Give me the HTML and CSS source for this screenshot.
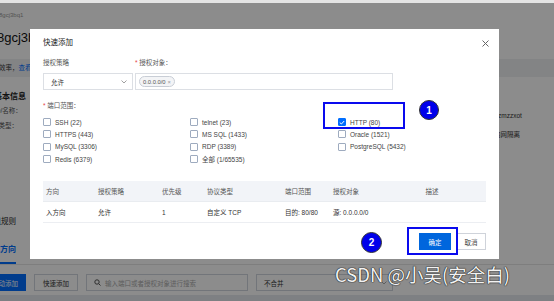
FILE: index.html
```html
<!DOCTYPE html>
<html lang="zh">
<head>
<meta charset="utf-8">
<title>快速添加</title>
<link rel="stylesheet" href="styles.css">
</head>
<body>
<div class="page">
  <div class="head">
    <div class="crumb">8gcj3bq1</div>
    <div class="big">8gcj3b</div>
  </div>
  <div class="band"><span>审核效率，<a class="lnk">查看</a></span></div>
  <div class="info">
    <div class="info-left">
      <div class="sec">基本信息</div>
      <div class="kv">ID/名称：</div>
      <div class="kv kv2">例类型：</div>
      <div class="kv kv3">时间：</div>
    </div>
    <div class="info-right">
      <div class="rv">zmzzxot</div>
      <div class="rv rv2 lnk">内网隔离</div>
    </div>
  </div>
  <div class="rules">全组规则</div>
  <div class="tabs"><span class="tab">入方向</span></div>
  <div class="toolbar">
    <span class="btn-primary">手动添加</span>
    <span class="btn">快速添加</span>
    <span class="search">
      <svg width="7" height="7" viewBox="0 0 7 7"><circle cx="3" cy="3" r="2.2" fill="none" stroke="#555" stroke-width="1"/><line x1="4.6" y1="4.6" x2="6.5" y2="6.5" stroke="#555" stroke-width="1"/></svg>
      <span class="ph">输入端口或者授权对象进行搜索</span>
    </span>
    <span class="merge">不合并
      <svg width="6" height="4" viewBox="0 0 6 4"><polyline points="0.5,0.5 3,3 5.5,0.5" fill="none" stroke="#999" stroke-width="0.8"/></svg>
    </span>
  </div>
  <div class="bthead">
    <span class="c1">授权策略</span>
    <span class="c2">优先级 ⓘ</span>
    <span class="c3">协议类型</span>
    <span class="c4">端口范围 ⓘ</span>
    <span class="c5">授权对象 ⓘ</span>
    <span class="c6">描述</span>
  </div>

  <div class="mask"></div>

  <div class="dialog">
    <div class="dlg-head">
      <span class="dlg-title">快速添加</span>
      <svg class="close" width="7" height="7" viewBox="0 0 7 7"><line x1="0.5" y1="0.5" x2="6.5" y2="6.5" stroke="#666" stroke-width="1"/><line x1="6.5" y1="0.5" x2="0.5" y2="6.5" stroke="#666" stroke-width="1"/></svg>
    </div>
    <div class="form-row">
      <div class="field f1">
        <div class="lbl">授权策略</div>
        <div class="select">允许
          <svg width="6" height="4" viewBox="0 0 6 4"><polyline points="0.5,0.5 3,3 5.5,0.5" fill="none" stroke="#888" stroke-width="0.8"/></svg>
        </div>
      </div>
      <div class="field f2">
        <div class="lbl"><span class="req">*</span> 授权对象：</div>
        <div class="input"><span class="tag">0.0.0.0/0 <span class="x">×</span></span></div>
      </div>
    </div>
    <div class="lbl ports-lbl"><span class="req">*</span> 端口范围：</div>
    <div class="ports">
      <label class="cb"><span class="box"></span>SSH (22)</label>
      <label class="cb"><span class="box"></span>telnet (23)</label>
      <label class="cb"><span class="box on"><svg width="6" height="5" viewBox="0 0 6 5"><polyline points="0.8,2.6 2.4,4 5.2,1" fill="none" stroke="#fff" stroke-width="1"/></svg></span>HTTP (80)</label>
      <label class="cb"><span class="box"></span>HTTPS (443)</label>
      <label class="cb"><span class="box"></span>MS SQL (1433)</label>
      <label class="cb"><span class="box"></span>Oracle (1521)</label>
      <label class="cb"><span class="box"></span>MySQL (3306)</label>
      <label class="cb"><span class="box"></span>RDP (3389)</label>
      <label class="cb"><span class="box"></span>PostgreSQL (5432)</label>
      <label class="cb"><span class="box"></span>Redis (6379)</label>
      <label class="cb"><span class="box"></span>全部 (1/65535)</label>
    </div>
    <div class="tbl">
      <div class="tr th">
        <span>方向</span><span>授权策略</span><span>优先级</span><span>协议类型</span><span>端口范围</span><span>授权对象</span><span class="desc">描述</span>
      </div>
      <div class="tr td">
        <span>入方向</span><span>允许</span><span>1</span><span>自定义 TCP</span><span>目的: 80/80</span><span>源: 0.0.0.0/0</span><span class="desc"></span>
      </div>
    </div>
    <div class="footer">
      <span class="ok">确定</span>
      <span class="cancel">取消</span>
    </div>
  </div>

  <div class="mark rect1"></div>
  <div class="mark rect2"></div>
  <div class="num n1">1</div>
  <div class="num n2">2</div>
  <div class="wm">CSDN @小吴(安全白)</div>
</div>
</body>
</html>
```
FILE: styles.css
```css
* { box-sizing: border-box; }
html, body { margin: 0; padding: 0; }
body {
  width: 554px; height: 301px; overflow: hidden;
  font-family: "Liberation Sans", "Noto Sans CJK SC", sans-serif;
  color: #333;
}
.page {
  position: relative; width: 554px; height: 301px; overflow: hidden;
  background: #fff; border-top: 3px solid #e4e4e4;
}
.lnk { color: #006eff; }

/* background page */
.crumb { margin-top: 7px; line-height: 10px; font-size: 6px; color: #999; margin-left: -1px; }
.big { margin-top: 8px; line-height: 20px; font-size: 13px; color: #111; margin-left: -3px; }
.band {
  margin-top: 11px; height: 18px; background: #eff0f3;
  display: flex; align-items: center; font-size: 6.5px; color: #333;
}
.band span { margin-left: -14px; margin-top: -3px; }
.info { display: flex; justify-content: space-between; }
.info-left { margin-left: -6px; }
.sec { margin-top: 14px; line-height: 12px; font-size: 8px; font-weight: 600; color: #222; }
.kv { margin-top: 3px; line-height: 10px; font-size: 6.5px; color: #555; }
.kv2 { margin-top: 5px; margin-left: -2px; }
.kv3 { margin-top: 36px; margin-left: -10px; }
.info-right { width: 56px; padding-top: 34px; }
.rv { line-height: 10px; font-size: 6.5px; color: #333; }
.rv2 { margin-top: 9px; margin-left: -4px; }
.rules { margin-top: 39px; line-height: 12px; font-size: 7.5px; color: #222; margin-left: -14px; }
.tabs { margin-top: 10px; border-bottom: 1px solid #e5e5e5; }
.tab {
  display: inline-block; margin-left: -8px; padding: 0 0 5px 0; line-height: 14px;
  font-size: 8px; font-weight: 600; color: #006eff; border-bottom: 2px solid #006eff;
}
.toolbar { margin-top: 9px; height: 17px; display: flex; gap: 8px; font-size: 6.5px; }
.btn-primary {
  margin-left: -16px; width: 42px; background: #006eff; color: #fff;
  display: flex; align-items: center; justify-content: center;
}
.btn {
  width: 44px; border: 1px solid #cfd5de; background: #fff; color: #333;
  display: flex; align-items: center; justify-content: center;
}
.search {
  width: 162px; border: 1px solid #cfd5de; background: #fff;
  display: flex; align-items: center; gap: 4px; padding-left: 7px; color: #aaa;
}
.merge {
  width: 137px; border: 1px solid #cfd5de; background: #fff; color: #333;
  display: flex; align-items: center; justify-content: space-between; padding: 0 5px 0 7px;
}
.bthead {
  margin-top: 4px; height: 14px; background: #e6e9ee;
  display: flex; align-items: flex-end; font-size: 6.5px; color: #555;
}
.bthead span { display: block; line-height: 9px; margin-bottom: -2px; }
.c1 { width: 55px; margin-left: -3px; }
.c2 { width: 53px; margin-left: 3px; }
.c3 { width: 97px; }
.c4 { width: 125px; }
.c5 { width: 120px; }

.mask { position: absolute; inset: -3px 0 0 0; background: rgba(0,0,0,0.45); }

/* dialog */
.dialog {
  position: absolute; left: 30px; top: 26px; width: 469px; height: 230px;
  background: #fff; padding: 0 13px;
  font-size: 6.5px; color: #444;
}
.dlg-head { height: 28px; display: flex; align-items: center; justify-content: space-between; }
.dlg-title { font-size: 7.5px; color: #222; line-height: 10px; }
.close { margin-right: -3px; }
.form-row { margin-top: 1px; display: flex; gap: 2px; }
.lbl { line-height: 10px; color: #555; font-size: 6.5px; }
.req { color: #e54545; }
.field .select, .field .input { margin-top: 5px; height: 17px; border: 1px solid #dcdfe4; }
.f1 { width: 90px; }
.f2 { width: 258px; }
.select {
  display: flex; align-items: center; justify-content: space-between;
  padding: 0 5px 0 7px; color: #333;
}
.input { display: flex; align-items: center; padding-left: 3px; }
.tag {
  height: 11px; border: 1px solid #c9ced6; border-radius: 6px; background: #f3f4f6;
  font-size: 5.8px; color: #555; padding: 0 3px; display: flex; align-items: center; gap: 2px;
}
.tag .x { color: #999; }
.ports-lbl { margin-top: 11px; }
.ports {
  margin-top: 5px; display: grid; grid-template-columns: 147px 148px 148px;
  grid-auto-rows: 12.33px;
}
.cb { display: flex; align-items: center; color: #444; font-size: 6.5px; }
.box {
  width: 8px; height: 8px; border: 1px solid #9eabbf; border-radius: 1px; margin-right: 4px;
  display: flex; align-items: center; justify-content: center; background: #fff;
}
.box.on { background: #006eff; border-color: #006eff; }
.tbl { margin-top: 16px; }
.tr {
  display: grid; grid-template-columns: 52px 64px 45px 78px 48px 45px 1fr;
  padding-left: 3px; height: 21px; align-items: center;
}
.th { background: #f2f4f8; color: #555; border-bottom: 1px solid #e9ecf0; }
.td { border-bottom: 1px solid #eceef2; color: #333; }
.desc { text-align: center; }
.footer { margin-top: 10px; display: flex; justify-content: flex-end; gap: 5px; }
.ok, .cancel { height: 17px; display: flex; align-items: center; justify-content: center; font-size: 6.5px; }
.ok { width: 32px; background: #0066dd; color: #fff; }
.cancel { width: 30px; border: 1px solid #cfd3da; color: #444; background: #fff; }

/* annotations */
.mark { position: absolute; border: 2px solid #0a0aee; }
.rect1 { left: 323px; top: 99px; width: 82px; height: 27px; }
.rect2 { left: 407px; top: 224px; width: 51px; height: 28px; }
.num {
  position: absolute; border-radius: 50%; background: #0000ea; border: 1px solid #333;
  color: #fff; font-weight: 700; font-size: 10px; font-family: "Liberation Sans", sans-serif;
  display: flex; align-items: center; justify-content: center;
}
.n1 { left: 419px; top: 97px; width: 20px; height: 20px; }
.n2 { left: 361px; top: 229px; width: 21px; height: 21px; }
.wm {
  position: absolute; left: 335px; top: 259px; font-size: 18.5px; line-height: 24px;
  font-family: "Noto Sans CJK SC", "Liberation Sans", sans-serif; font-weight: 400;
  color: #f2f2f2; text-shadow: 0 0 1px #222, 0 0 1px #222, 0 0 1px #222;
}
```
